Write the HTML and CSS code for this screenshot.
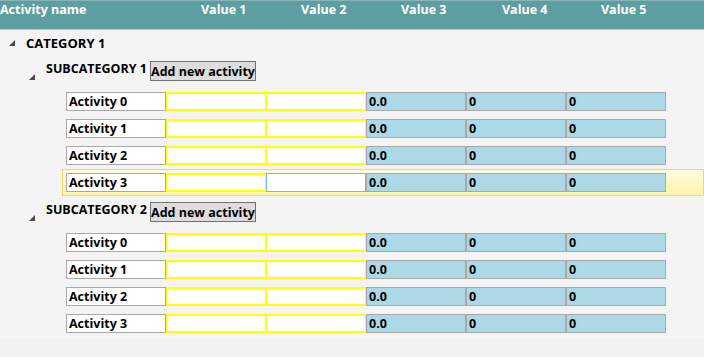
FILE: index.html
```html
<!DOCTYPE html>
<html>
<head>
<meta charset="utf-8">
<link rel="stylesheet" href="styles.css">
</head>
<body>
<div class="header">
  <div class="hcell hname">Activity name</div>
  <div class="hcell">Value 1</div>
  <div class="hcell">Value 2</div>
  <div class="hcell">Value 3</div>
  <div class="hcell h4">Value 4</div>
  <div class="hcell">Value 5</div>
</div>
<div class="tree">
  <div class="cat">
    <svg class="tri" width="6" height="6" viewBox="0 0 6 6"><path d="M6 0 L6 6 L0 6 Z" fill="#4a4a4a"/></svg>
    <span class="cat-label">CATEGORY 1</span>
  </div>

  <div class="sub">
    <svg class="tri sub-tri" width="6" height="6" viewBox="0 0 6 6"><path d="M6 0 L6 6 L0 6 Z" fill="#4a4a4a"/></svg>
    <span class="sub-label">SUBCATEGORY 1</span>
    <button class="add">Add new activity</button>
  </div>
  <div class="row"><div class="cell name">Activity 0</div><div class="cell input"></div><div class="cell input"></div><div class="cell val">0.0</div><div class="cell val">0</div><div class="cell val">0</div></div>
  <div class="row"><div class="cell name">Activity 1</div><div class="cell input"></div><div class="cell input"></div><div class="cell val">0.0</div><div class="cell val">0</div><div class="cell val">0</div></div>
  <div class="row"><div class="cell name">Activity 2</div><div class="cell input"></div><div class="cell input"></div><div class="cell val">0.0</div><div class="cell val">0</div><div class="cell val">0</div></div>
  <div class="row selected"><div class="cell name">Activity 3</div><div class="cell input"></div><div class="cell input focus"></div><div class="cell val">0.0</div><div class="cell val">0</div><div class="cell val">0</div></div>

  <div class="sub">
    <svg class="tri sub-tri" width="6" height="6" viewBox="0 0 6 6"><path d="M6 0 L6 6 L0 6 Z" fill="#4a4a4a"/></svg>
    <span class="sub-label">SUBCATEGORY 2</span>
    <button class="add">Add new activity</button>
  </div>
  <div class="row"><div class="cell name">Activity 0</div><div class="cell input"></div><div class="cell input"></div><div class="cell val">0.0</div><div class="cell val">0</div><div class="cell val">0</div></div>
  <div class="row"><div class="cell name">Activity 1</div><div class="cell input"></div><div class="cell input"></div><div class="cell val">0.0</div><div class="cell val">0</div><div class="cell val">0</div></div>
  <div class="row"><div class="cell name">Activity 2</div><div class="cell input"></div><div class="cell input"></div><div class="cell val">0.0</div><div class="cell val">0</div><div class="cell val">0</div></div>
  <div class="row"><div class="cell name">Activity 3</div><div class="cell input"></div><div class="cell input"></div><div class="cell val">0.0</div><div class="cell val">0</div><div class="cell val">0</div></div>
</div>
</body>
</html>
```
FILE: styles.css
```css
* { box-sizing: border-box; }
html, body { margin: 0; padding: 0; }
body {
  background: #f2f2f2;
  font-family: "Open Sans", "Noto Sans", sans-serif;
  font-weight: 700;
  font-size: 12px;
  color: #000;
  width: 704px;
  height: 357px;
  overflow: hidden;
}
.header {
  display: flex;
  height: 30px;
  background: #5f9ea0;
  border-top: 1px solid #86b6b8;
  border-bottom: 1px solid #a9cbcc;
  color: #fff;
  font-size: 12.5px;
}
.hcell {
  width: 100px;
  padding-top: 1px;
  line-height: 16px;
}
.hname { width: 201px; padding-left: 0; }
.h4 { padding-left: 1px; }

.tree {
  background: #f4f4f4;
  border-bottom: 1px solid #f8f8f8;
  height: 308px;
}
.cat {
  height: 25px;
  display: flex;
  align-items: flex-start;
  padding-left: 9px;
}
.tri { display: block; flex: none; }
.cat .tri { margin-top: 10px; }
.cat-label {
  margin-left: 11px;
  margin-top: 5px;
  line-height: 16px;
  font-size: 13px;
}
.sub {
  height: 33px;
  display: flex;
  align-items: flex-start;
  padding-left: 29px;
}
.sub .tri { margin-top: 19px; }
.sub-label {
  margin-left: 11px;
  margin-top: 6px;
  line-height: 16px;
  font-size: 12.5px;
}
.add {
  margin-left: 3px;
  margin-top: 6px;
  height: 20px;
  width: 106px;
  padding: 0;
  background: #dddddd;
  border: 1px solid #707070;
  font-family: inherit;
  font-weight: 700;
  font-size: 12.5px;
  line-height: 16px;
  color: #000;
  padding-top: 2px;
}
.row {
  display: flex;
  margin-left: 62px;
  padding: 3px;
  border: 1px solid transparent;
  height: 27px;
}
.row.selected {
  border-color: #f8d55e;
  background: linear-gradient(#fffce2, #fff4a6);
}
.cell {
  width: 100px;
  height: 19px;
  border: 1px solid #a9a9a9;
  background: #fff;
  font-size: 12.5px;
  line-height: 17px;
  padding-left: 2px;
  flex: none;
}
.cell.input {
  border: 1px solid #ffff00;
  border-top-width: 2px;
  border-bottom-width: 2px;
}
.cell.input.focus {
  border: 1px solid #7eb4ea;
}
.cell.val {
  background: #add8e6;
}
```
